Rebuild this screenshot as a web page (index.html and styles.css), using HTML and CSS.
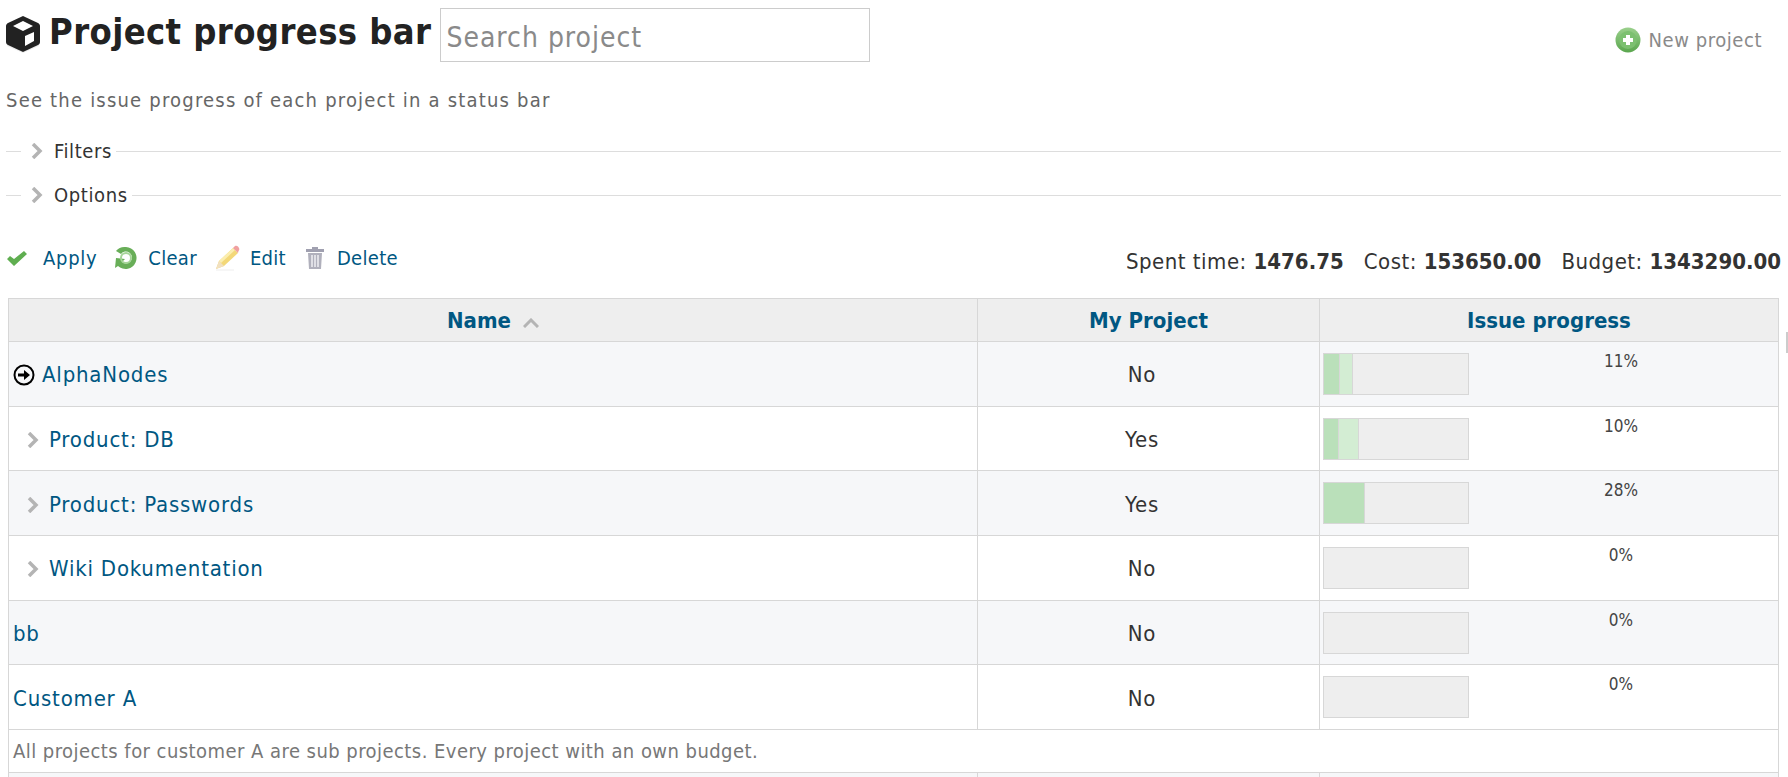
FILE: index.html
```html
<!DOCTYPE html>
<html lang="en">
<head>
<meta charset="utf-8">
<title>Project progress bar</title>
<link rel="stylesheet" href="styles.css">
</head>
<body>
<div class="head">
  <svg class="cube" viewBox="0 0 34 38" width="34" height="38"><path fill="#eee" d="M1 28l16 9 16-9v3l-16 7-16-7z"/><path fill="#222" d="M17 1l15 7c1 .5 2 1.500 2 3v16c0 1.500-1 2.500-2 3l-15 7-15-7c-1-.5-2-1.500-2-3V11c0-1.500 1-2.500 2-3z"/><path fill="#fff" d="M17 6l10 5-10 5-10-5z"/><path fill="#fff" d="M19 21l9-4v9l-9 5z"/></svg>
  <h1 class="title">Project progress bar</h1>
  <input class="search" type="text" placeholder="Search project">
  <a class="new" href="#"><svg viewBox="0 0 26 26" width="26" height="26"><defs><linearGradient id="ng" x1="0" y1="0" x2="0" y2="1"><stop offset="0" stop-color="#9ad08c"/><stop offset="1" stop-color="#5aa64e"/></linearGradient></defs><circle cx="13" cy="13" r="12.500" fill="url(#ng)"/><circle cx="13" cy="13" r="9" fill="#7cc070"/><path fill="#fff" d="M11 8h4v3h3v4h-3v3h-4v-3H8v-4h3z"/></svg>New project</a>
</div>
<p class="desc">See the issue progress of each project in a status bar</p>
<div class="fold fold-first"><i class="dash"></i><svg class="chev" viewBox="0 0 12 16" width="12" height="16"><path d="M2 1l7 7-7 7" fill="none" stroke="#b4b4b4" stroke-width="3.500"/></svg><span>Filters</span><i class="rule"></i></div>
<div class="fold fold-second"><i class="dash"></i><svg class="chev" viewBox="0 0 12 16" width="12" height="16"><path d="M2 1l7 7-7 7" fill="none" stroke="#b4b4b4" stroke-width="3.500"/></svg><span>Options</span><i class="rule"></i></div>
<div class="bar">
  <div class="actions">
    <a href="#" class="act act-apply"><svg viewBox="0 0 22 18" width="22" height="18"><path d="M1 10l3-3 4 3 10-8 3 3L8 17z" fill="#5fae50"/></svg>Apply</a>
    <a href="#" class="act act-clear"><svg viewBox="0 0 25 26" width="25" height="26"><path d="M13 2a11 11 0 1 1-8 19l-3 2 1-10 9 1-3 3a6 6 0 1 0-1-8L3 6a11 11 0 0 1 10-4z" fill="#68ae58"/><circle cx="13" cy="13" r="5" fill="none" stroke="#a5d598" stroke-width="2"/></svg>Clear</a>
    <a href="#" class="act"><svg viewBox="0 0 27 26" width="27" height="26"><path d="M2 24l3-8L19 3l5 5L10 21z" fill="#f3d878"/><path d="M5 16L19 3l2 2L7 18z" fill="#fbeeb0"/><path d="M19 3l2-2c1-.5 2-.5 3 .5l1 1.500c.5 1 .5 2-.5 3L24 8z" fill="#f0a0a0"/><path d="M2 24l3-8 5 5z" fill="#f1e0c0"/><path d="M2 25h18" stroke="#eee"/></svg>Edit</a>
    <a href="#" class="act act-del"><svg viewBox="0 0 22 26" width="22" height="26"><path d="M8 2h6v2h6v3H2V4h6z" fill="#a0a0b0"/><path d="M4 8h14l-1 16H5z" fill="#b0b0bc"/><path d="M8 10v12M11 10v12M14 10v12" stroke="#eeeef2" stroke-width="1.500"/></svg>Delete</a>
  </div>
  <div class="totals">Spent time: <b>1476.75</b><span class="sep"></span>Cost: <b>153650.00</b><span class="sep"></span>Budget: <b>1343290.00</b></div>
</div>
<table class="list">
  <colgroup><col class="c1"><col class="c2"><col class="c3"></colgroup>
  <thead><tr><th><a href="#">Name</a><svg class="sort" viewBox="0 0 16 10" width="16" height="10"><path d="M1 9l7-7 7 7" fill="none" stroke="#b4b4b4" stroke-width="3"/></svg></th><th><a href="#">My Project</a></th><th><a href="#">Issue progress</a></th></tr></thead>
  <tbody>
    <tr class="odd"><td class="name"><svg class="jump" viewBox="0 0 22 22" width="22" height="22"><circle cx="11" cy="11" r="9.500" fill="none" stroke="#000" stroke-width="2"/><path d="M5 9.500h6V6l6 5-6 5v-3.500H5z" fill="#000"/></svg><a href="#">AlphaNodes</a></td><td class="mine">No</td><td class="prog"><div class="pbar"><i class="done" style="width:16px"></i><i class="late" style="width:13px"></i></div><span class="pct">11%</span></td></tr>
    <tr><td class="name"><svg class="tree" viewBox="0 0 12 16" width="12" height="16"><path d="M2 1l7 7-7 7" fill="none" stroke="#b4b4b4" stroke-width="3.500"/></svg><a href="#">Product: DB</a></td><td class="mine">Yes</td><td class="prog"><div class="pbar"><i class="done" style="width:15px"></i><i class="late" style="width:20px"></i></div><span class="pct">10%</span></td></tr>
    <tr class="odd"><td class="name"><svg class="tree" viewBox="0 0 12 16" width="12" height="16"><path d="M2 1l7 7-7 7" fill="none" stroke="#b4b4b4" stroke-width="3.500"/></svg><a href="#">Product: Passwords</a></td><td class="mine">Yes</td><td class="prog"><div class="pbar"><i class="done" style="width:41px"></i></div><span class="pct">28%</span></td></tr>
    <tr><td class="name"><svg class="tree" viewBox="0 0 12 16" width="12" height="16"><path d="M2 1l7 7-7 7" fill="none" stroke="#b4b4b4" stroke-width="3.500"/></svg><a href="#">Wiki Dokumentation</a></td><td class="mine">No</td><td class="prog"><div class="pbar"></div><span class="pct">0%</span></td></tr>
    <tr class="odd"><td class="name"><a href="#">bb</a></td><td class="mine">No</td><td class="prog"><div class="pbar"></div><span class="pct">0%</span></td></tr>
    <tr><td class="name"><a href="#">Customer A</a></td><td class="mine">No</td><td class="prog"><div class="pbar"></div><span class="pct">0%</span></td></tr>
    <tr><td class="note" colspan="3">All projects for customer A are sub projects. Every project with an own budget.</td></tr>
    <tr class="odd tail"><td></td><td></td><td></td></tr>
  </tbody>
</table>
<i class="edge"></i>
</body>
</html>
```

FILE: styles.css
```css
html, body { margin: 0; height: 777px; overflow: hidden; background: #fff; }
body { position: relative; font-family: "DejaVu Sans Condensed", "DejaVu Sans", sans-serif; font-stretch: condensed; font-size: 22px; color: #333; }
a { color: #005782; text-decoration: none; }

.head { display: flex; align-items: flex-start; padding: 8px 26px 0 6px; height: 78px; box-sizing: border-box; }
.cube { margin-top: 7px; flex: none; }
.title { margin: 3px 0 0 9px; font-size: 36px; line-height: 42px; font-weight: bold; letter-spacing: .4px; color: #222; white-space: nowrap; }
.search { width: 430px; height: 54px; box-sizing: border-box; margin-left: 9px; padding: 4px 5px 0; border: 1px solid #ccc; font: inherit; font-size: 28px; letter-spacing: 1px; color: #333; }
.search::placeholder { color: #8a8a8a; opacity: 1; }
.new { margin-left: auto; margin-top: 19px; display: flex; align-items: center; gap: 8px; color: #8a8a8a; font-size: 20px; letter-spacing: .55px; }

.desc { margin: 0; padding: 10px 0 0 6px; font-size: 20px; line-height: 24px; color: #666; letter-spacing: 1.2px; }
.fold { display: flex; align-items: center; height: 24px; margin: 19px 7px 0 6px; color: #333; font-size: 20px; letter-spacing: .6px; }
.fold-first { margin-top: 27px; }
.fold-second { margin-top: 20px; }
.dash { width: 15px; border-top: 1px solid #ddd; }
.chev { margin: 0 11px 0 10px; }
.rule { flex: 1; border-top: 1px solid #ddd; margin-left: 4px; }

.bar { display: flex; justify-content: space-between; align-items: flex-start; margin: 36px 7px 0 6px; height: 55px; }
.actions { display: flex; gap: 18px; font-size: 20px; letter-spacing: .3px; }
.act { display: flex; align-items: center; gap: 9px; height: 30px; }
.act-apply { gap: 15px; letter-spacing: .7px; margin-right: -2px; }
.act-clear { gap: 10px; margin-right: -1px; }
.act-del { gap: 11px; }
.totals { font-size: 22px; letter-spacing: .5px; padding-top: 6px; white-space: nowrap; }
.totals b { color: #333; letter-spacing: 0; }
.sep { display: inline-block; width: 20px; }

.list { border-collapse: collapse; table-layout: fixed; width: 1771px; margin-left: 8px; }
.c1 { width: 969px; }
.c2 { width: 342px; }
.list th, .list td { border: 1px solid #d7d7d7; }
.list th { background: #eee; height: 42px; padding: 0; font-size: 22px; font-weight: bold; }
.sort { margin-left: 12px; }
.list td { height: 63.7px; padding: 0; }
.odd td { background: #f6f7f9; }
.list .name, .list .mine { height: 61.7px; padding-top: 2px; }
.name { padding-left: 4px !important; font-size: 22px; letter-spacing: .8px; white-space: nowrap; }
.jump { vertical-align: -4px; margin-right: 7px; }
.tree { vertical-align: -1px; margin: 0 10px 0 14px; }
.mine { text-align: center; color: #333; letter-spacing: .8px; padding-right: 13px !important; }
.prog { position: relative; vertical-align: middle; padding-left: 3px !important; }
.pbar { display: flex; width: 144px; height: 40px; background: #eee; border: 1px solid #d7d7d7; }
.pbar i { display: block; height: 100%; box-sizing: border-box; border-right: 1px solid #d7d7d7; }
.done { background: #bae0ba; }
.late { background: #d3edd3; }
.pct { position: absolute; top: 9px; left: 144px; right: 0; text-align: center; font-size: 17px; line-height: 20px; color: #444; }
.note { height: 42px !important; padding-left: 4px !important; font-size: 20px; letter-spacing: .45px; color: #777; }
.list .tail td { height: 4px; border-bottom: 0; }
.edge { position: absolute; top: 332px; right: 0; width: 2px; height: 21px; background: #ccc; }
```
